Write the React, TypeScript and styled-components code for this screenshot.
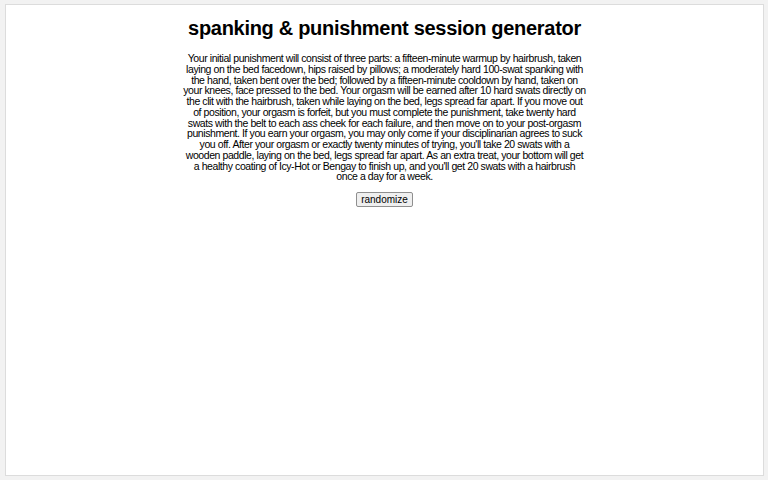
import styled, { createGlobalStyle } from "styled-components";

const GlobalStyle = createGlobalStyle`
  html, body {
    margin: 0;
    padding: 0;
    background: #f2f2f2;
  }
  body {
    padding: 4px 4px 4px 5px;
    font-family: "Liberation Sans", Arial, sans-serif;
  }
`;

const Page = styled.main`
  box-sizing: border-box;
  height: 472px;
  background: #ffffff;
  border: 1px solid #dcdcdc;
  display: flex;
  flex-direction: column;
  align-items: center;
  padding-top: 11px;
`;

const Title = styled.h1`
  margin: 0;
  font-size: 20px;
  letter-spacing: -0.3px;
  font-weight: bold;
  color: #000;
  line-height: 24px;
`;

const Session = styled.p`
  margin: 13px 0 0;
  font-size: 10.5px;
  letter-spacing: -0.42px;
  line-height: 10.75px;
  text-align: center;
  color: #000;
`;

const Line = styled.span`
  display: block;
  white-space: nowrap;
`;

const Button = styled.button`
  margin-top: 10px;
  height: 15px;
  font-family: "Liberation Sans", Arial, sans-serif;
  font-size: 10px;
  line-height: 11px;
  padding: 0 4px;
  background: #efefef;
  border: 1px solid #8f8f8f;
  border-radius: 2px;
  color: #000;
`;

const session = [
  "Your initial punishment will consist of three parts: a fifteen-minute warmup by hairbrush, taken",
  "laying on the bed facedown, hips raised by pillows; a moderately hard 100-swat spanking with",
  "the hand, taken bent over the bed; followed by a fifteen-minute cooldown by hand, taken on",
  "your knees, face pressed to the bed. Your orgasm will be earned after 10 hard swats directly on",
  "the clit with the hairbrush, taken while laying on the bed, legs spread far apart. If you move out",
  "of position, your orgasm is forfeit, but you must complete the punishment, take twenty hard",
  "swats with the belt to each ass cheek for each failure, and then move on to your post-orgasm",
  "punishment. If you earn your orgasm, you may only come if your disciplinarian agrees to suck",
  "you off. After your orgasm or exactly twenty minutes of trying, you'll take 20 swats with a",
  "wooden paddle, laying on the bed, legs spread far apart. As an extra treat, your bottom will get",
  "a healthy coating of Icy-Hot or Bengay to finish up, and you'll get 20 swats with a hairbrush",
  "once a day for a week.",
];

export default function App() {
  return (
    <>
      <GlobalStyle />
      <Page>
        <Title>spanking &amp; punishment session generator</Title>
        <Session>
          {session.map((line, i) => (
            <Line key={i}>{line}</Line>
          ))}
        </Session>
        <Button>randomize</Button>
      </Page>
    </>
  );
}
